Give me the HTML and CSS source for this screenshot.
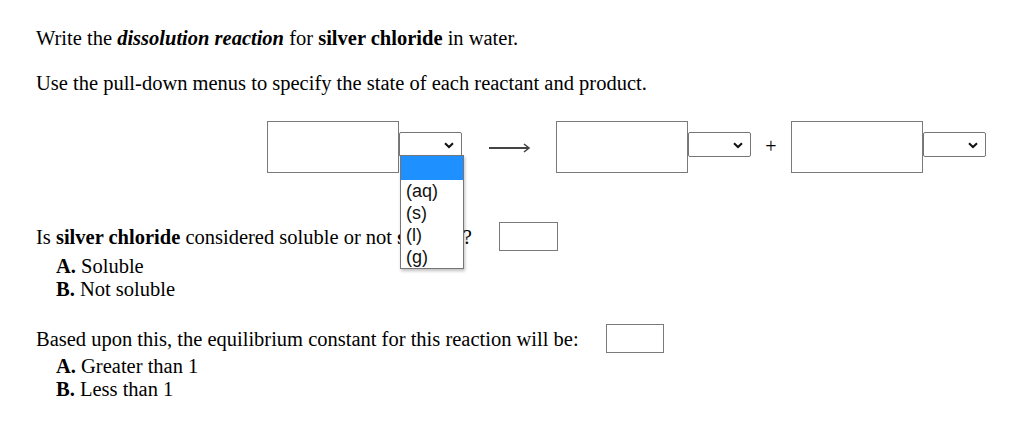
FILE: index.html
```html
<!DOCTYPE html>
<html lang="en">
<head>
  <meta charset="UTF-8">
  <title>Dissolution reaction</title>
  <link rel="stylesheet" href="styles.css">
</head>
<body>

  <div class="page">
    <p class="intro">Write the <b><i>dissolution reaction</i></b> for <b>silver chloride</b> in water.</p>
    <p class="intro">Use the pull-down menus to specify the state of each reactant and product.</p>

    <div class="equation">
      <input type="text" class="species">
      <span class="state open">
        <select><option></option><option>(aq)</option><option>(s)</option><option>(l)</option><option>(g)</option></select>
        <svg class="chev" width="10" height="7" viewBox="0 0 10 7"><path d="M1 1.2 L5 5 L9 1.2" fill="none" stroke="#111" stroke-width="2"/></svg>
        <div class="menu">
          <div class="opt sel">&nbsp;</div>
          <div class="opt">(aq)</div>
          <div class="opt">(s)</div>
          <div class="opt">(l)</div>
          <div class="opt">(g)</div>
        </div>
      </span>
      <svg class="arrow" width="42" height="12" viewBox="0 0 42 12"><path d="M0 6 H40" stroke="#444" stroke-width="2"/><path d="M35 2 L40 6 L35 10" fill="none" stroke="#444" stroke-width="1.6"/></svg>
      <input type="text" class="species">
      <span class="state">
        <select><option></option><option>(aq)</option><option>(s)</option><option>(l)</option><option>(g)</option></select>
        <svg class="chev" width="10" height="7" viewBox="0 0 10 7"><path d="M1 1.2 L5 5 L9 1.2" fill="none" stroke="#111" stroke-width="2"/></svg>
      </span>
      <span class="plus">+</span>
      <input type="text" class="species">
      <span class="state">
        <select><option></option><option>(aq)</option><option>(s)</option><option>(l)</option><option>(g)</option></select>
        <svg class="chev" width="10" height="7" viewBox="0 0 10 7"><path d="M1 1.2 L5 5 L9 1.2" fill="none" stroke="#111" stroke-width="2"/></svg>
      </span>
    </div>

    <div class="question q1">
      <span>Is <b>silver chloride</b> considered soluble or not <b>soluble</b>&thinsp;?</span>
      <input type="text" class="answer">
    </div>
    <ul class="choices">
      <li><b>A.</b> Soluble</li>
      <li><b>B.</b> Not soluble</li>
    </ul>

    <div class="question q2">
      <span>Based upon this, the equilibrium constant for this reaction will be:</span>
      <input type="text" class="answer">
    </div>
    <ul class="choices">
      <li><b>A.</b> Greater than 1</li>
      <li><b>B.</b> Less than 1</li>
    </ul>
  </div>

</body>
</html>
```

FILE: styles.css
```css
body {
  margin: 0;
  background: #fff;
  color: #000;
}
.page {
  padding: 27px 36px;
  font-family: "Liberation Serif", "Times New Roman", serif;
  font-size: 20.5px;
  line-height: 22px;
}
.intro {
  margin: 0 0 23px;
}
.equation {
  display: flex;
  align-items: flex-start;
  margin-top: 27px;
  margin-left: 231px;
  height: 52px;
}
.equation > * {
  flex-shrink: 0;
}
.species {
  box-sizing: border-box;
  width: 132px;
  height: 52px;
  margin: 0;
  border: 1px solid #7a7a7a;
  padding: 0;
}
.state {
  position: relative;
  display: block;
  height: 25px;
  margin-top: 11px;
}
.state select {
  appearance: none;
  -webkit-appearance: none;
  display: block;
  box-sizing: border-box;
  width: 63px;
  height: 25px;
  margin: 0;
  border: 1px solid #767676;
  border-radius: 2px;
  background: #fff;
}
.chev {
  position: absolute;
  right: 8px;
  top: 10px;
  pointer-events: none;
}
.menu {
  position: absolute;
  left: 1px;
  top: 23px;
  width: 64px;
  box-sizing: border-box;
  border: 1px solid #767676;
  background: #fff;
  box-shadow: 1px 2px 3px rgba(0, 0, 0, 0.25);
  font-family: "Liberation Sans", Arial, sans-serif;
  font-size: 18px;
  line-height: 22px;
  z-index: 2;
}
.opt {
  padding-left: 5px;
  color: #111;
}
.opt.sel {
  background: #1e90ff;
  height: 24px;
}
.arrow {
  margin: 21px 25px 0 27px;
}
.plus {
  width: 40px;
  margin-top: 14px;
  text-align: center;
  font-size: 20px;
}
.question {
  display: flex;
  align-items: center;
  height: 29px;
}
.q1 {
  margin-top: 49px;
}
.q2 {
  margin-top: 23px;
}
.answer {
  box-sizing: border-box;
  height: 29px;
  margin: 0;
  border: 1px solid #7a7a7a;
  padding: 0;
}
.q1 .answer {
  width: 59px;
  margin-left: 27px;
}
.q2 .answer {
  width: 58px;
  margin-left: 27px;
}
.choices {
  list-style: none;
  margin: 4px 0 0;
  padding-left: 20px;
  line-height: 23px;
}
.q2 + .choices {
  margin-top: 2px;
}
```
